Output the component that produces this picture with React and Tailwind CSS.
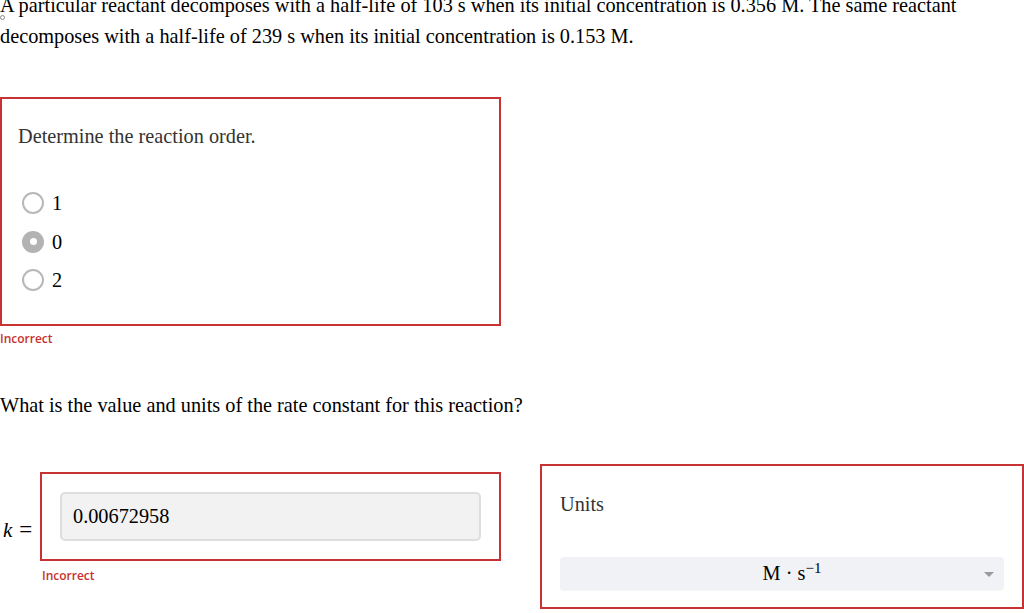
import React from "react";

const serif = { fontFamily: '"Liberation Serif", "Times New Roman", serif' };

function Radio({ checked, label }) {
  return (
    <div className="flex h-[38.5px] items-center pl-[4px]">
      {checked ? (
        <span className="flex h-[22px] w-[22px] items-center justify-center rounded-full bg-[#b3b3b3]">
          <span className="h-[7px] w-[7px] rounded-full bg-white" />
        </span>
      ) : (
        <span className="h-[22px] w-[22px] rounded-full border-2 border-[#b8b8b8] bg-white" />
      )}
      <span className="ml-[8px] text-[20.3px] leading-[24px] text-black">{label}</span>
    </div>
  );
}

function Incorrect({ className = "" }) {
  return (
    <div
      className={"text-[12px] font-semibold leading-[16px] text-[#c8302e] " + className}
      style={{ fontFamily: '"Open Sans", "Noto Sans", sans-serif' }}
    >
      Incorrect
    </div>
  );
}

export default function App() {
  return (
    <div className="relative h-[613px] w-[1024px] overflow-hidden bg-white" style={serif}>
      <span className="absolute left-[0px] top-[15px] h-[5px] w-[5px] rounded-full border border-[#888]" />
      <div className="-mt-[10px]">
        <p className="w-[1010px] text-[20.3px] leading-[31px] text-black">
          A particular reactant decomposes with a half-life of 103 s when its initial concentration is 0.356 M. The same reactant decomposes with a half-life of 239 s when its initial concentration is 0.153 M.
        </p>

        <div className="mt-[45px] w-[501px] border-2 border-[#c83232] pl-[16px] pt-[25px] pb-[24px]">
          <div className="text-[20.3px] leading-[24px] text-[#333]">Determine the reaction order.</div>
          <div className="mt-[36px] flex flex-col">
            <Radio label="1" />
            <Radio label="0" checked />
            <Radio label="2" />
          </div>
        </div>
        <Incorrect className="mt-[5px]" />

        <div className="mt-[46px] text-[20.3px] leading-[24px] text-black">
          What is the value and units of the rate constant for this reaction?
        </div>

        <div className="mt-[47px] flex items-start">
          <div className="mt-[8px] flex flex-col">
            <div className="flex items-end">
              <div className="mb-[19px] flex w-[40px] items-center pl-[3px] text-[21px] leading-[24px] text-black">
                <span className="italic">k</span>
                <span className="ml-[7px] text-[23px]">=</span>
              </div>
              <div className="w-[461px] border-2 border-[#c83232] px-[18px] py-[18px]">
                <div className="flex h-[49px] items-center rounded-[5px] border-2 border-[#dedede] bg-[#f2f2f2] pl-[11px] text-[20.3px] text-black">
                  0.00672958
                </div>
              </div>
            </div>
            <Incorrect className="ml-[42px] mt-[7px]" />
          </div>

          <div className="ml-[39px] w-[502px] border-2 border-[#c83232] px-[18px] pt-[26px] pb-[17px]">
            <div className="text-[20.3px] leading-[24px] text-[#333]">Units</div>
            <div className="relative mt-[41px] flex h-[33px] items-center justify-center rounded-[4px] bg-[#f1f2f6] pl-[20px] shadow-[0_1px_1px_rgba(0,0,0,0.04)]">
              <span className="text-[20.3px] leading-[24px] text-black">
                M · s<sup className="text-[15px]">−1</sup>
              </span>
              <span className="absolute right-[10px] top-[15px] h-0 w-0 border-x-[5px] border-t-[5px] border-x-transparent border-t-[#9a9a9a]" />
            </div>
          </div>
        </div>
      </div>
    </div>
  );
}
